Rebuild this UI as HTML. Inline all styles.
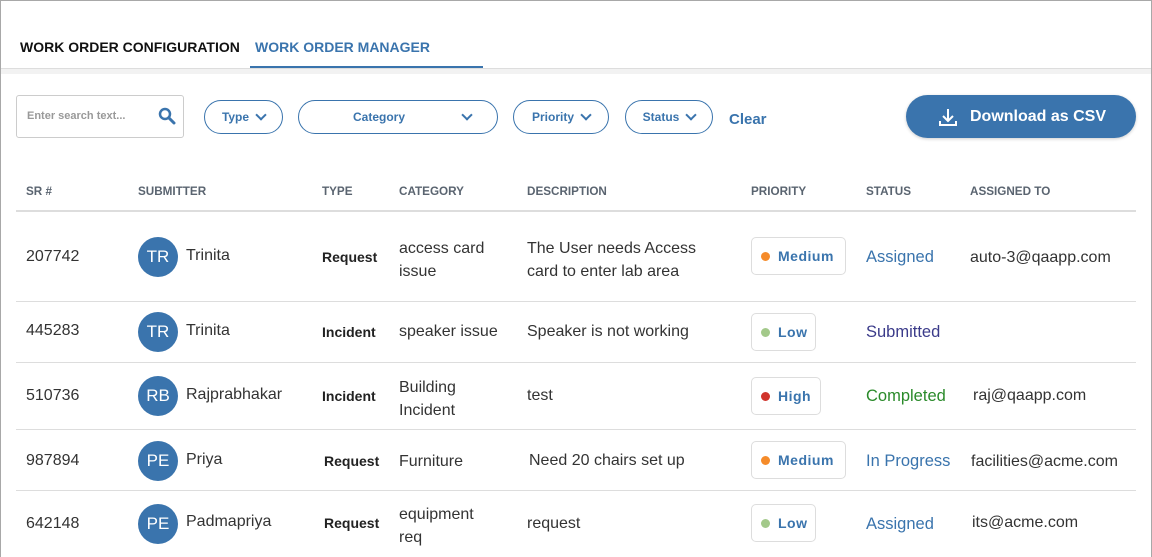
<!DOCTYPE html>
<html><head><style>
*{margin:0;padding:0;box-sizing:border-box}
body{width:1152px;height:557px;overflow:hidden;background:#fff;font-family:"Liberation Sans",sans-serif;position:relative;color:#333}
.frame{position:absolute;inset:0;border:1px solid #a8a8a8;border-bottom:none}
.a{position:absolute;white-space:nowrap}
.pill{position:absolute;height:34px;border:1px solid #3a74ad;border-radius:17px;color:#3a74ad;font-weight:bold;font-size:12px;display:flex;align-items:center;justify-content:center;gap:8px}
.chev{width:8px;height:8px;border-right:2px solid #3a74ad;border-bottom:2px solid #3a74ad;transform:rotate(45deg);margin-top:-5px}
.th{position:absolute;top:185px;font-size:11.7px;font-weight:bold;color:#5a6470}
.line{position:absolute;left:16px;width:1120px;height:1px;background:#ddd}
.av{position:absolute;width:40px;height:40px;border-radius:50%;background:#3a74ad;color:#fff;font-size:17px;display:flex;align-items:center;justify-content:center}
.t{font-size:16px;color:#333}
.b{font-size:14px;font-weight:bold;color:#222}
.badge{position:absolute;left:751px;height:38px;border:1px solid #ddd;border-radius:5px;display:flex;align-items:center;padding-left:9px;gap:8px;font-size:14px;font-weight:bold;color:#3a74ad;letter-spacing:.5px}
.dot{width:9px;height:9px;border-radius:50%}
</style></head><body>
<div class="frame"></div>
<div class="a" style="left:20px;top:39px;font-size:14px;font-weight:bold;color:#111">WORK ORDER CONFIGURATION</div>
<div class="a" style="left:255px;top:39px;font-size:14px;font-weight:bold;color:#3a74ad">WORK ORDER MANAGER</div>
<div class="a" style="left:250px;top:66px;width:233px;height:2px;background:#3a74ad"></div>
<div class="a" style="left:1px;top:68px;width:1150px;height:6px;background:#f2f2f2;border-top:1px solid #ddd"></div>
<div class="a" style="left:16px;top:95px;width:168px;height:43px;border:1px solid #ccc;border-radius:3px"></div>
<div class="a" style="left:27px;top:110px;font-size:11px;font-weight:bold;color:#999">Enter search text...</div>
<svg class="a" style="left:158px;top:107px" width="18" height="18" viewBox="0 0 18 18"><circle cx="7" cy="7" r="5" fill="none" stroke="#3a74ad" stroke-width="2.5"/><path d="M11 11l5 5" stroke="#3a74ad" stroke-width="3" stroke-linecap="round"/></svg>
<div class="pill" style="left:204px;top:100px;width:79px">Type <span class="chev"></span></div>
<div class="pill" style="left:298px;top:100px;width:200px;justify-content:flex-start;padding-left:54px">Category <span class="chev" style="margin-left:auto;margin-right:26px"></span></div>
<div class="pill" style="left:513px;top:100px;width:96px">Priority <span class="chev"></span></div>
<div class="pill" style="left:625px;top:100px;width:88px">Status <span class="chev"></span></div>
<div class="a" style="left:729px;top:111px;font-size:15px;font-weight:bold;color:#3a74ad">Clear</div>
<div class="a" style="left:906px;top:95px;width:230px;height:43px;border-radius:22px;background:#3a74ad;box-shadow:0 1px 3px rgba(0,0,0,.2)"></div>
<svg class="a" style="left:937px;top:106px" width="22" height="22" viewBox="0 0 22 22"><path d="M11 3v12M6 10l5 5 5-5M3 15v4h16v-4" fill="none" stroke="#fff" stroke-width="2"/></svg>
<div class="a" style="left:970px;top:108px;font-size:16px;font-weight:bold;color:#fff">Download as CSV</div>

<div class="th" style="left:26px">SR #</div>
<div class="th" style="left:138px">SUBMITTER</div>
<div class="th" style="left:322px">TYPE</div>
<div class="th" style="left:399px">CATEGORY</div>
<div class="th" style="left:527px">DESCRIPTION</div>
<div class="th" style="left:751px">PRIORITY</div>
<div class="th" style="left:866px">STATUS</div>
<div class="th" style="left:970px">ASSIGNED TO</div>
<div class="line" style="top:210px;height:2px"></div>
<div class="line" style="top:301px"></div>
<div class="line" style="top:362px"></div>
<div class="line" style="top:429px"></div>
<div class="line" style="top:490px"></div>

<div class="a t" style="left:26px;top:248px">207742</div>
<div class="av" style="left:138px;top:237px">TR</div>
<div class="a t" style="left:186px;top:247px">Trinita</div>
<div class="a b" style="left:322px;top:249px">Request</div>
<div class="a t" style="left:399px;top:237px;line-height:23px">access card<br>issue</div>
<div class="a t" style="left:527px;top:237px;line-height:23px">The User needs Access<br>card to enter lab area</div>
<div class="badge" style="top:237px;width:95px"><span class="dot" style="background:#f58b2a"></span>Medium</div>
<div class="a t" style="left:866px;top:248px;color:#3a74ad;font-size:16.5px">Assigned</div>
<div class="a t" style="left:970px;top:249px">auto-3@qaapp.com</div>

<div class="a t" style="left:26px;top:322px">445283</div>
<div class="av" style="left:138px;top:312px">TR</div>
<div class="a t" style="left:186px;top:322px">Trinita</div>
<div class="a b" style="left:322px;top:324px">Incident</div>
<div class="a t" style="left:399px;top:323px">speaker issue</div>
<div class="a t" style="left:527px;top:323px">Speaker is not working</div>
<div class="badge" style="top:313px;width:65px"><span class="dot" style="background:#a3c98a"></span>Low</div>
<div class="a t" style="left:866px;top:323px;color:#3b3b8a;font-size:16.5px">Submitted</div>

<div class="a t" style="left:26px;top:387px">510736</div>
<div class="av" style="left:138px;top:376px">RB</div>
<div class="a t" style="left:186px;top:386px">Rajprabhakar</div>
<div class="a b" style="left:322px;top:388px">Incident</div>
<div class="a t" style="left:399px;top:376px;line-height:23px">Building<br>Incident</div>
<div class="a t" style="left:527px;top:387px">test</div>
<div class="badge" style="top:377px;width:70px"><span class="dot" style="background:#d0342c"></span>High</div>
<div class="a t" style="left:866px;top:387px;color:#2a8a2a;font-size:16.5px">Completed</div>
<div class="a t" style="left:973px;top:387px">raj@qaapp.com</div>

<div class="a t" style="left:26px;top:452px">987894</div>
<div class="av" style="left:138px;top:441px">PE</div>
<div class="a t" style="left:186px;top:451px">Priya</div>
<div class="a b" style="left:324px;top:453px">Request</div>
<div class="a t" style="left:399px;top:453px">Furniture</div>
<div class="a t" style="left:529px;top:452px">Need 20 chairs set up</div>
<div class="badge" style="top:441px;width:95px"><span class="dot" style="background:#f58b2a"></span>Medium</div>
<div class="a t" style="left:866px;top:452px;color:#3a74ad;font-size:16.5px">In Progress</div>
<div class="a t" style="left:971px;top:453px">facilities@acme.com</div>

<div class="a t" style="left:26px;top:515px">642148</div>
<div class="av" style="left:138px;top:504px">PE</div>
<div class="a t" style="left:186px;top:513px">Padmapriya</div>
<div class="a b" style="left:324px;top:515px">Request</div>
<div class="a t" style="left:399px;top:503px;line-height:23px">equipment<br>req</div>
<div class="a t" style="left:527px;top:515px">request</div>
<div class="badge" style="top:504px;width:65px"><span class="dot" style="background:#a3c98a"></span>Low</div>
<div class="a t" style="left:866px;top:515px;color:#3a74ad;font-size:16.5px">Assigned</div>
<div class="a t" style="left:972px;top:514px">its@acme.com</div>
</body></html>
